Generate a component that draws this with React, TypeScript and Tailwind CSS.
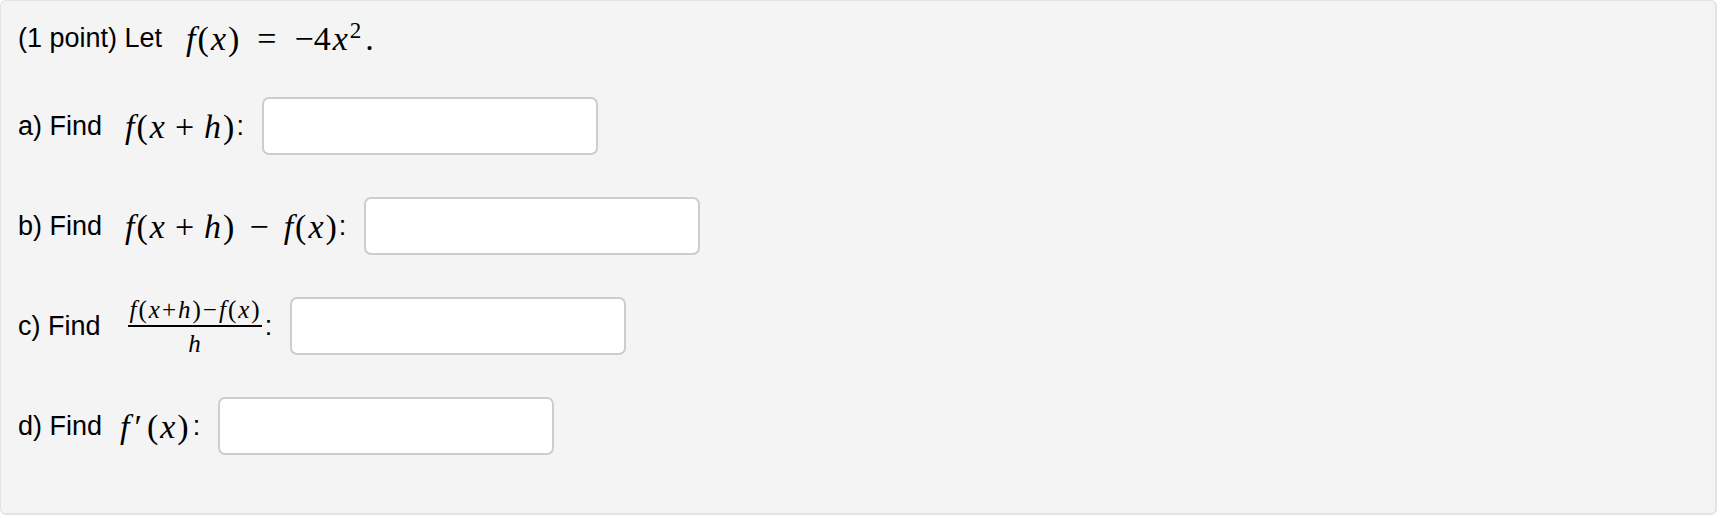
import React from "react";

const serif = "font-['Liberation_Serif','Times_New_Roman',serif]";
const math = `${serif} text-[34px] tracking-[2px]`;

// italic math letter
const V = ({ children }: { children: React.ReactNode }) => (
  <span className="italic">{children}</span>
);

const Field = () => (
  <div className="h-[58px] w-[336px] rounded-[7px] border-2 border-[#cdcdcd] bg-white" />
);

const Fraction = () => (
  <span className={`${serif} ml-[27px] mr-[3px] inline-flex flex-col items-center text-[25px] leading-none`}>
    <span className="pb-[3px] pl-[2px] tracking-[2px]">
      <V>f</V>(<V>x</V>+<V>h</V>)−<V>f</V>(<V>x</V>)
    </span>
    <span className="h-[2px] w-full bg-black" />
    <span className="pt-[4px]">
      <V>h</V>
    </span>
  </span>
);

export default function App() {
  return (
    <div className="h-[518px] w-[1728px] bg-white">
      <div className="h-[515px] w-[1717px] rounded-[6px] border border-r-2 border-b-2 border-[#e3e3e3] bg-[#f4f4f4] pl-[17px] pt-[8px] font-['Liberation_Sans',Arial,sans-serif] text-[27px] text-black">
        {/* statement */}
        <div className="flex h-[58px] items-center">
          <span>(1 point) Let</span>
          <span className={`${math} ml-[24px]`}>
            <V>f</V>(<V>x</V>)<span className="ml-[16px] mr-[16px]">=</span>
            <span className="tracking-[0px]">−</span>4<V>x</V>
            <sup className="text-[23px]">2</sup>
            <span className="ml-[2px]">.</span>
          </span>
        </div>

        <div className="mt-[30px] flex flex-col gap-[42px]">
          {/* a */}
          <div className="flex h-[58px] items-center">
            <span>a) Find</span>
            <span className={`${math} ml-[23px]`}>
              <V>f</V>(<V>x</V>
              <span className="mx-[8px]">+</span>
              <V>h</V>)
            </span>
            <span>:</span>
            <span className="ml-[18px]">
              <Field />
            </span>
          </div>

          {/* b */}
          <div className="flex h-[58px] items-center">
            <span>b) Find</span>
            <span className={`${math} ml-[23px]`}>
              <V>f</V>(<V>x</V>
              <span className="mx-[8px]">+</span>
              <V>h</V>)<span className="mx-[13px]">−</span>
              <V>f</V>(<V>x</V>)
            </span>
            <span>:</span>
            <span className="ml-[18px]">
              <Field />
            </span>
          </div>

          {/* c */}
          <div className="flex h-[58px] items-center">
            <span>c) Find</span>
            <Fraction />
            <span>:</span>
            <span className="ml-[18px]">
              <Field />
            </span>
          </div>

          {/* d */}
          <div className="flex h-[58px] items-center">
            <span>d) Find</span>
            <span className={`${math} ml-[18px]`}>
              <V>f</V>
              <span className="ml-[3px] mr-[3px]">′</span>(<V>x</V>)
            </span>
            <span className="ml-[2px]">:</span>
            <span className="ml-[18px]">
              <Field />
            </span>
          </div>
        </div>
      </div>
    </div>
  );
}
